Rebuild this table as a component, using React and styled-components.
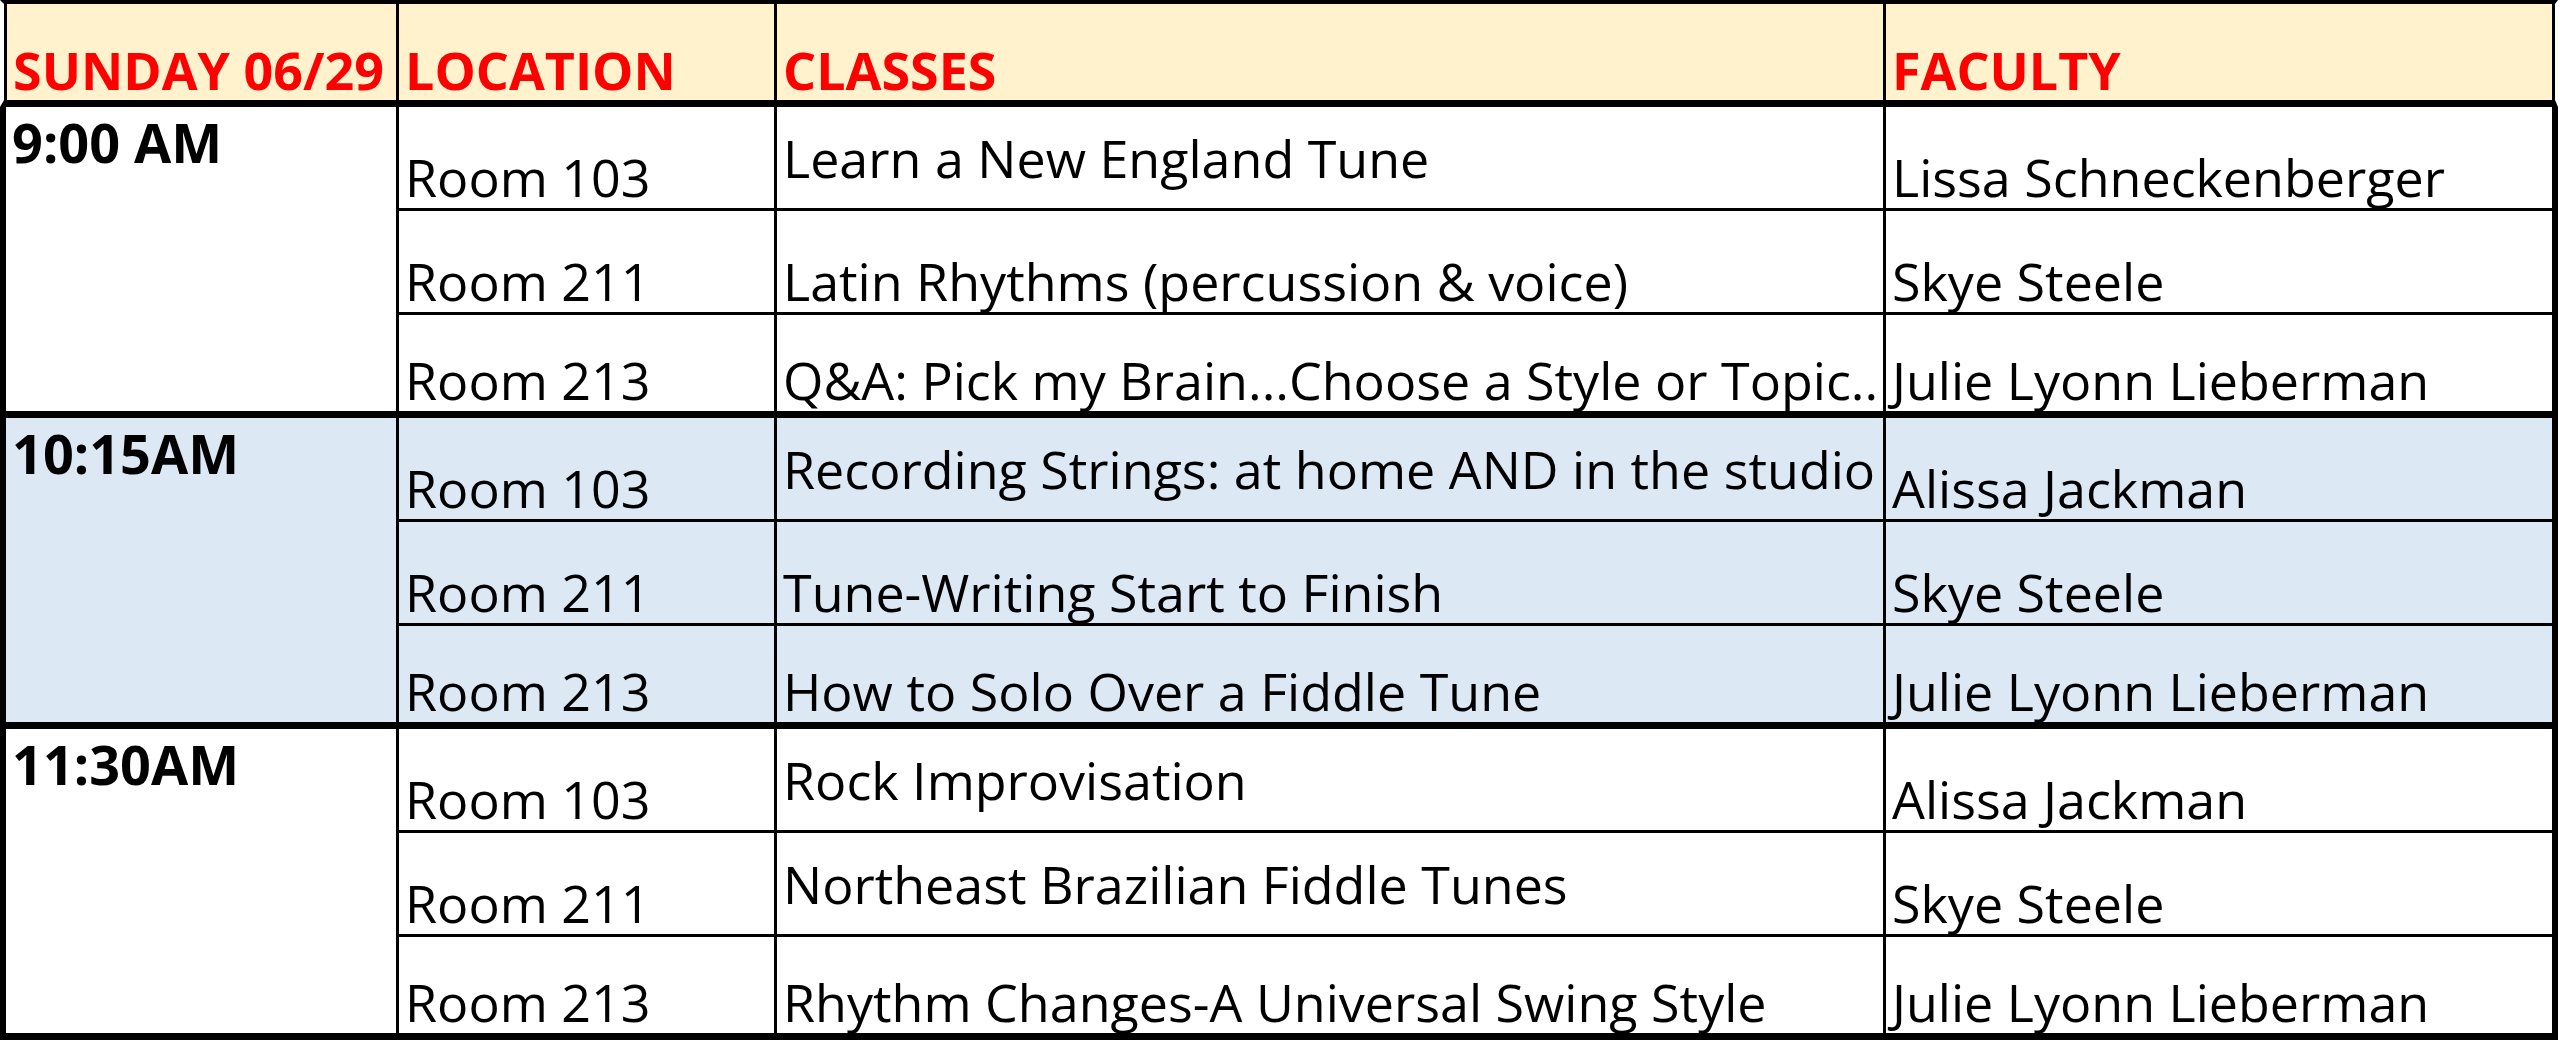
import React from 'react';
import styled, { createGlobalStyle } from 'styled-components';

const GlobalStyle = createGlobalStyle`
  html, body {
    margin: 0;
    padding: 0;
    background: #fff;
  }
  * {
    box-sizing: border-box;
  }
`;

// Sheet grid: header row, then three time groups of three rooms each
const Sheet = styled.div`
  display: grid;
  width: 2558px;
  grid-template-columns: 399px 378px 1109px 672px;
  grid-template-rows: 107px repeat(3, 104px 104px 103px);
  font-family: "Open Sans", "Noto Sans", sans-serif;
  color: #000;
`;

const HeadCell = styled.div`
  display: flex;
  align-items: flex-end;
  padding: 0 6px 4px;
  background: #fff2cc;
  border-top: 4px solid #000;
  border-bottom: 7px solid #000;
  border-right: 3px solid #000;
  color: #ff0000;
  font-weight: 700;
  font-size: 52px;
  line-height: 52px;
  white-space: nowrap;
  overflow: hidden;

  ${({ $first }) => $first && `
    border-left: 4px solid #fff;
    box-shadow: inset 3px 0 0 #000;
    padding-left: 9px;
  `}

  ${({ $last }) => $last && `
    border-right: 3px solid #fff;
    box-shadow: inset -3px 0 0 #000;
  `}
`;

const TimeCell = styled.div`
  grid-row: span 3;
  padding: 4px 6px 0;
  background: ${({ $bg }) => $bg};
  border-left: 6px solid #000;
  border-right: 3px solid #000;
  border-bottom: 7px solid #000;
  font-weight: 700;
  font-size: 54px;
  line-height: 62px;
  white-space: nowrap;
`;

const Cell = styled.div`
  display: flex;
  align-items: ${({ $middle }) => ($middle ? 'center' : 'flex-end')};
  padding: 0 6px;
  background: ${({ $bg }) => $bg};
  border-right: ${({ $edge }) => ($edge ? '6px' : '3px')} solid #000;
  border-bottom: ${({ $thick }) => ($thick ? '7px' : '3px')} solid #000;
  font-size: 52px;
  line-height: 62px;
  white-space: nowrap;
`;

const groups = [
  {
    time: '9:00 AM',
    bg: '#ffffff',
    rows: [
      { room: 'Room 103', title: 'Learn a New England Tune', who: 'Lissa Schneckenberger', middle: true },
      { room: 'Room 211', title: 'Latin Rhythms (percussion & voice)', who: 'Skye Steele' },
      { room: 'Room 213', title: 'Q&A: Pick my Brain...Choose a Style or Topic..', who: 'Julie Lyonn Lieberman' },
    ],
  },
  {
    time: '10:15AM',
    bg: '#dde8f5',
    rows: [
      { room: 'Room 103', title: 'Recording Strings: at home AND in the studio', who: 'Alissa Jackman', middle: true },
      { room: 'Room 211', title: 'Tune-Writing Start to Finish', who: 'Skye Steele' },
      { room: 'Room 213', title: 'How to Solo Over a Fiddle Tune', who: 'Julie Lyonn Lieberman' },
    ],
  },
  {
    time: '11:30AM',
    bg: '#ffffff',
    rows: [
      { room: 'Room 103', title: 'Rock Improvisation', who: 'Alissa Jackman', middle: true },
      { room: 'Room 211', title: 'Northeast Brazilian Fiddle Tunes', who: 'Skye Steele', middle: true },
      { room: 'Room 213', title: 'Rhythm Changes-A Universal Swing Style', who: 'Julie Lyonn Lieberman' },
    ],
  },
];

const App = () => (
  <>
    <GlobalStyle />
    <Sheet>
      <HeadCell $first>SUNDAY 06/29</HeadCell>
      <HeadCell>LOCATION</HeadCell>
      <HeadCell>CLASSES</HeadCell>
      <HeadCell $last>FACULTY</HeadCell>

      {groups.map((g) => (
        <React.Fragment key={g.time}>
          <TimeCell $bg={g.bg}>{g.time}</TimeCell>
          {g.rows.map((r, i) => {
            const thick = i === g.rows.length - 1;
            return (
              <React.Fragment key={r.room}>
                <Cell $bg={g.bg} $thick={thick}>{r.room}</Cell>
                <Cell $bg={g.bg} $thick={thick} $middle={r.middle}>{r.title}</Cell>
                <Cell $bg={g.bg} $thick={thick} $edge>{r.who}</Cell>
              </React.Fragment>
            );
          })}
        </React.Fragment>
      ))}
    </Sheet>
  </>
);

export default App;
